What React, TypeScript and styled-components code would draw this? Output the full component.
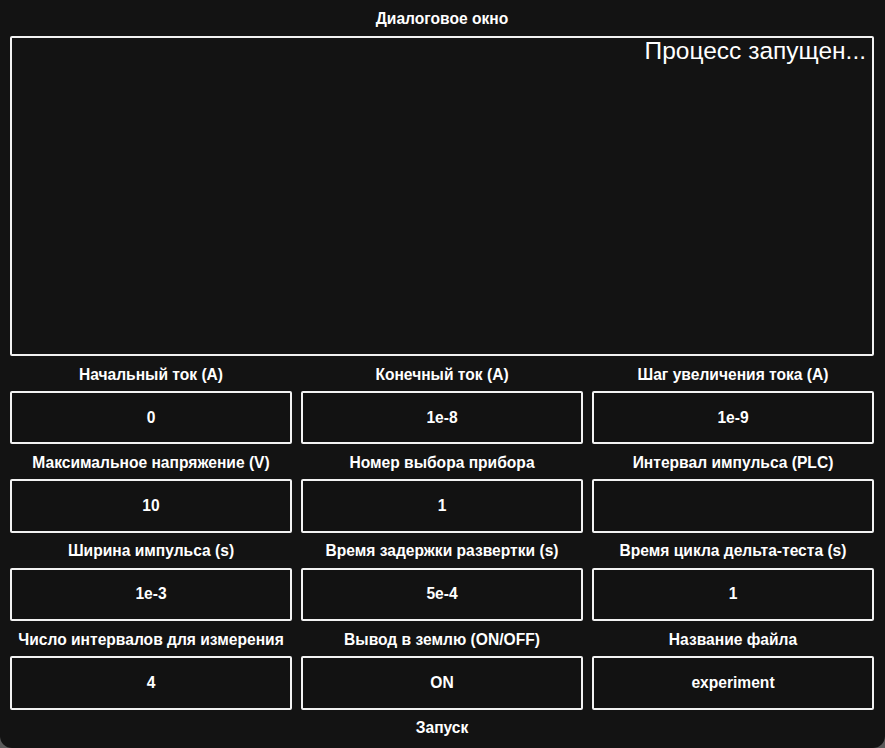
import styled, { createGlobalStyle } from 'styled-components';

const GlobalStyle = createGlobalStyle`
  html, body {
    margin: 0;
    padding: 0;
    background: #5a5a5a;
  }
  * {
    box-sizing: border-box;
  }
`;

const Wrapper = styled.div`
  width: 885px;
  height: 748px;
  background: #131313;
  border-radius: 0 0 12px 12px;
  padding: 0 11px 0 10px;
  display: flex;
  flex-direction: column;
  font-family: "Liberation Sans", Arial, sans-serif;
  color: #fff;
`;

const Title = styled.h1`
  margin: 0;
  height: 36px;
  padding-top: 2px;
  display: flex;
  align-items: center;
  justify-content: center;
  font-size: 15.6px;
  font-weight: 700;
`;

const Dialog = styled.div`
  height: 320px;
  border: 2px solid #f2f2f2;
  border-radius: 2px;
  background: #131313;
  padding: 0 6px;
  text-align: right;
  font-size: 24.5px;
  line-height: 25px;
`;

const Grid = styled.div`
  display: grid;
  grid-template-columns: repeat(3, 1fr);
  column-gap: 9px;
`;

const Field = styled.div`
  display: flex;
  flex-direction: column;
`;

const Label = styled.label`
  height: 35px;
  padding-top: 2px;
  display: flex;
  align-items: center;
  justify-content: center;
  font-size: 15.6px;
  font-weight: 700;
  white-space: nowrap;
`;

const Input = styled.input`
  height: 53.4px;
  width: 100%;
  border: 2px solid #f2f2f2;
  border-radius: 2px;
  background: #121212;
  color: #fff;
  text-align: center;
  font-family: "Liberation Sans", Arial, sans-serif;
  font-size: 15.6px;
  font-weight: 700;
  outline: none;
`;

const StartButton = styled.button`
  flex: 1;
  background: none;
  border: none;
  color: #fff;
  font-family: "Liberation Sans", Arial, sans-serif;
  font-size: 15.6px;
  font-weight: 700;
  padding: 0 0 2px;
  cursor: pointer;
`;

type FieldData = {
  label: string;
  value: string;
};

const fields: FieldData[] = [
  { label: 'Начальный ток (A)', value: '0' },
  { label: 'Конечный ток (A)', value: '1e-8' },
  { label: 'Шаг увеличения тока (A)', value: '1e-9' },
  { label: 'Максимальное напряжение (V)', value: '10' },
  { label: 'Номер выбора прибора', value: '1' },
  { label: 'Интервал импульса (PLC)', value: '' },
  { label: 'Ширина импульса (s)', value: '1e-3' },
  { label: 'Время задержки развертки (s)', value: '5e-4' },
  { label: 'Время цикла дельта-теста (s)', value: '1' },
  { label: 'Число интервалов для измерения', value: '4' },
  { label: 'Вывод в землю (ON/OFF)', value: 'ON' },
  { label: 'Название файла', value: 'experiment' },
];

function App(): JSX.Element {
  return (
    <>
      <GlobalStyle />
      <Wrapper>
        <Title>Диалоговое окно</Title>
        <Dialog>Процесс запущен...</Dialog>
        <Grid>
          {fields.map((f) => (
            <Field key={f.label}>
              <Label>{f.label}</Label>
              <Input defaultValue={f.value} />
            </Field>
          ))}
        </Grid>
        <StartButton>Запуск</StartButton>
      </Wrapper>
    </>
  );
}

export default App;
